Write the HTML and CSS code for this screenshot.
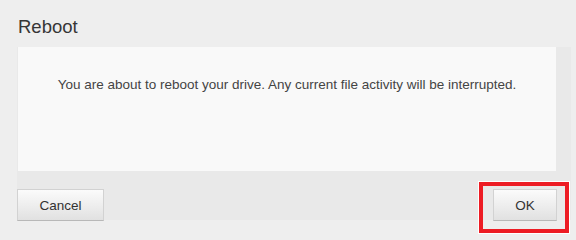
FILE: index.html
```html
<!DOCTYPE html>
<html lang="en">
<head>
    <meta charset="UTF-8">
    <title>Reboot</title>
    <link rel="stylesheet" href="styles.css">
</head>
<body>
    <h2 class="title">Reboot</h2>
    <div class="dialog">
        <div class="panel">
            <p>You are about to reboot your drive. Any current file activity will be interrupted.</p>
        </div>
        <div class="actions">
            <button class="btn">Cancel</button>
            <button class="btn btn-ok">OK</button>
        </div>
    </div>
    <div class="highlight"></div>
</body>
</html>
```

FILE: styles.css
```css
body {
    font-family: "Liberation Sans", Arial, sans-serif;
    background-color: #eeeeee;
    margin: 0;
    width: 576px;
    height: 240px;
    position: relative;
    overflow: hidden;
}

.title {
    margin: 0;
    padding: 16px 0 0 18px;
    font-size: 18.5px;
    font-weight: normal;
    line-height: 21px;
    color: #363636;
    height: 31px;
}

.dialog {
    margin-left: 17px;
    width: 554px;
    height: 173px;
    background: #e9e9e9;
}

.panel {
    margin-left: 1px;
    width: 538px;
    height: 124px;
    background: #f9f9f9;
    box-sizing: border-box;
    padding-top: 30px;
}

.panel p {
    margin: 0;
    text-align: center;
    font-size: 13.5px;
    line-height: 15px;
    color: #444444;
}

.actions {
    display: flex;
    justify-content: space-between;
    padding: 18px 14px 0 0;
}

.btn {
    font-family: "Liberation Sans", Arial, sans-serif;
    font-size: 13.5px;
    color: #333333;
    height: 32px;
    width: 87px;
    border: 1px solid #d2d2d2;
    border-bottom-color: #b8b8b8;
    background: linear-gradient(#fbfbfb, #e1e1e1);
    padding: 0;
}

.btn-ok {
    width: 64px;
}

.highlight {
    position: absolute;
    left: 479px;
    top: 182px;
    width: 82px;
    height: 43px;
    border: 4px solid #ed1c24;
    outline: 1px solid #ffffff;
}
```
